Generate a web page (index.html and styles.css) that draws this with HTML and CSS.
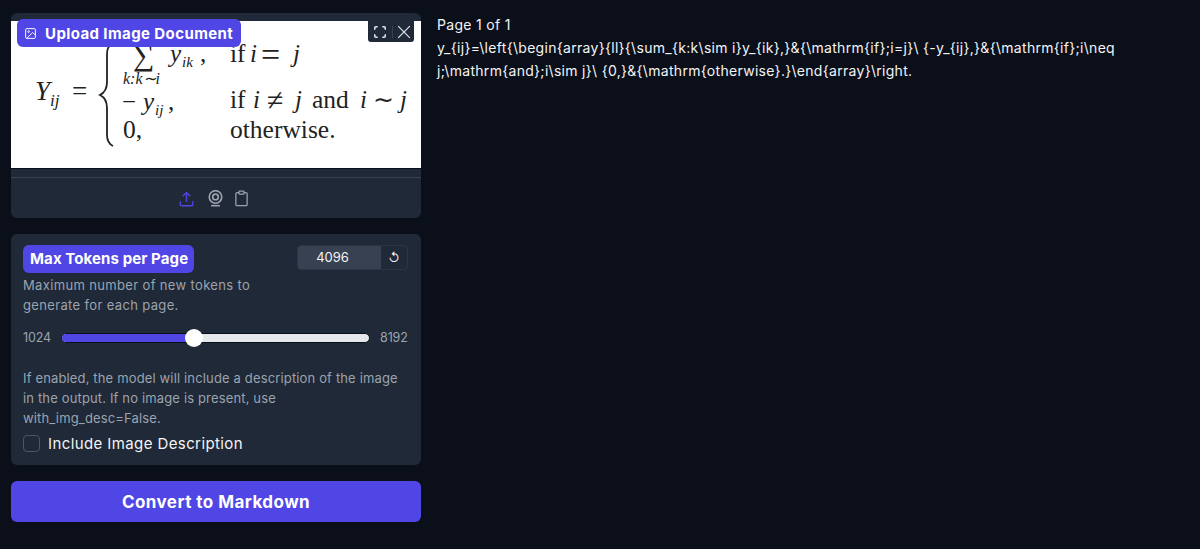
FILE: index.html
```html
<!DOCTYPE html>
<html lang="en">

<head>
	<meta charset="UTF-8">
	<title>Image to Markdown</title>
	<link rel="stylesheet" href="styles.css">
</head>

<body>
	<div class="page">
		<div class="left">
			<div class="card upload">
				<div class="upload-label">
					<svg class="label-icon" viewBox="0 0 24 24" fill="none" stroke="currentColor" stroke-width="1.8">
						<rect x="3" y="3" width="18" height="18" rx="2"></rect>
						<circle cx="8.5" cy="8.5" r="1.5"></circle>
						<path d="M21 15l-5-5L5 21"></path>
					</svg>
					Upload Image Document
				</div>
				<div class="image-actions">
					<button class="action-btn">
						<svg viewBox="0 0 24 24" fill="none" stroke="currentColor" stroke-width="2.6">
							<path d="M3 8V5a2 2 0 0 1 2-2h3M16 3h3a2 2 0 0 1 2 2v3M21 16v3a2 2 0 0 1-2 2h-3M8 21H5a2 2 0 0 1-2-2v-3"></path>
						</svg>
					</button>
					<span class="action-sep"></span>
					<button class="action-btn">
						<svg viewBox="0 0 24 24" fill="none" stroke="currentColor" stroke-width="2">
							<path d="M2 2l20 20M22 2L2 22"></path>
						</svg>
					</button>
				</div>
				<div class="preview">
					<svg class="formula" viewBox="0 0 410 148">
						<text class="m i" x="24" y="79" font-size="27">Y</text>
						<text class="m i" x="39" y="85" font-size="17">ij</text>
						<text class="m" x="61" y="79" font-size="27">=</text>
						<path class="brace" d="M102 22c-4 2-6 5-6 11v28c0 6-3 11-7 13 4 2 7 7 7 13v27c0 6 2 9 6 11"></path>
						<text class="m" x="122" y="44" font-size="30">∑</text>
						<text class="m i" x="159" y="41" font-size="25">y</text>
						<text class="m i" x="171" y="46" font-size="15">ik</text>
						<text class="m" x="189" y="41" font-size="25">,</text>
						<text class="m i" x="112" y="63" font-size="16">k:k∼i</text>
						<text class="m" x="219" y="41" font-size="25.500">if</text>
						<text class="m i" x="239" y="41" font-size="25">i</text>
						<text class="m" x="250" y="45" font-size="34">=</text>
						<text class="m i" x="282" y="41" font-size="25">j</text>
						<text class="m" x="111" y="89" font-size="25">−</text>
						<text class="m i" x="132" y="89" font-size="25">y</text>
						<text class="m i" x="144" y="94" font-size="15">ij</text>
						<text class="m" x="157" y="89" font-size="25">,</text>
						<text class="m" x="219" y="87" font-size="25.500">if</text>
						<text class="m i" x="242" y="87" font-size="25">i</text>
						<text class="m" x="256" y="89" font-size="30">≠</text>
						<text class="m i" x="284" y="87" font-size="25">j</text>
						<text class="m" x="301" y="87" font-size="25.500">and</text>
						<text class="m i" x="349" y="87" font-size="25">i</text>
						<text class="m" x="362" y="87" font-size="25">∼</text>
						<text class="m i" x="389" y="87" font-size="25">j</text>
						<text class="m" x="112" y="117" font-size="25.500">0,</text>
						<text class="m" x="219" y="117" font-size="25.500">otherwise.</text>
					</svg>
				</div>
				<div class="toolbar">
					<svg class="tool tool-active" viewBox="0 0 24 27" fill="none" stroke="currentColor" stroke-width="2.200">
						<path d="M2 18v5a2 2 0 0 0 2 2h16a2 2 0 0 0 2-2v-5M12 19V4M6 10l6-6 6 6"></path>
					</svg>
					<svg class="tool" viewBox="0 0 24 27" fill="none" stroke="currentColor" stroke-width="2.600">
						<circle cx="12" cy="11" r="10"></circle>
						<circle cx="12" cy="11" r="4.500"></circle>
						<path d="M5 25h14"></path>
					</svg>
					<svg class="tool" viewBox="0 0 24 27" fill="none" stroke="currentColor" stroke-width="2">
						<rect x="3" y="4" width="18" height="21" rx="2"></rect>
						<rect class="tool-clip" x="8" y="1.500" width="8" height="5" rx="1"></rect>
					</svg>
				</div>
			</div>

			<div class="card options">
				<div class="tokens-head">
					<div class="tokens-text">
						<span class="badge">Max Tokens per Page</span>
						<p class="hint">Maximum number of new tokens to generate for each page.</p>
					</div>
					<div class="number-box">
						<span class="number-value">4096</span>
						<span class="number-reset">↺</span>
					</div>
				</div>
				<div class="slider-row">
					<span class="slider-min">1024</span>
					<div class="slider">
						<div class="slider-fill"></div>
						<div class="slider-thumb"></div>
					</div>
					<span>8192</span>
				</div>
				<p class="hint desc">If enabled, the model will include a description of the image<br>in the output. If no image is present, use<br>with_img_desc=False.</p>
				<label class="check-row">
					<span class="checkbox"></span>
					Include Image Description
				</label>
			</div>

			<button class="convert">Convert to Markdown</button>
		</div>

		<div class="output">
			<p>Page 1 of 1</p>
			<p>y_{ij}=\left{\begin{array}{ll}{\sum_{k:k\sim i}y_{ik},}&amp;{\mathrm{if};i=j}\ {-y_{ij},}&amp;{\mathrm{if};i\neq<br>j;\mathrm{and};i\sim j}\ {0,}&amp;{\mathrm{otherwise}.}\end{array}\right.</p>
		</div>
	</div>
</body>

</html>
```

FILE: styles.css
```css
* {
	margin: 0;
	padding: 0;
	box-sizing: border-box;
}

body {
	font-family: "Inter", "Open Sans", sans-serif;
	background: #0b0f19;
	color: #f3f4f6;
	height: 549px;
	overflow: hidden;
}

.page {
	display: flex;
	gap: 16px;
	padding: 13px 11px;
}

.left {
	width: 410px;
	display: flex;
	flex-direction: column;
	gap: 16px;
	flex-shrink: 0;
}

.card {
	background: #1f2937;
	border-radius: 6px;
}

.upload {
	position: relative;
	height: 205px;
	padding-top: 8px;
}

.upload-label {
	position: absolute;
	top: 6px;
	left: 6px;
	width: 224px;
	height: 28px;
	display: flex;
	align-items: center;
	gap: 8px;
	padding-left: 7px;
	background: #4f46e5;
	border-radius: 6px;
	color: #fff;
	font-size: 15px;
	font-weight: 700;
	letter-spacing: 0.4px;
	white-space: nowrap;
}

.label-icon {
	width: 13px;
	height: 13px;
	flex-shrink: 0;
}

.image-actions {
	position: absolute;
	top: 8px;
	right: 7px;
	width: 46px;
	height: 21px;
	display: flex;
	align-items: center;
	justify-content: space-between;
	padding: 0 3px 0 5px;
	background: #1f2937;
	border-radius: 0 0 3px 3px;
}

.action-btn {
	background: none;
	border: none;
	color: #e5e7eb;
	display: flex;
}

.action-btn svg {
	width: 14px;
	height: 14px;
}

.action-sep {
	width: 1px;
	height: 12px;
	background: #374151;
}

.preview {
	height: 148px;
	background: #fff;
	border-bottom: 1px solid #0b0f19;
}

.formula {
	display: block;
	width: 410px;
	height: 148px;
}

.m {
	font-family: "Liberation Serif", serif;
	fill: #222;
}

.i {
	font-style: italic;
}

.brace {
	fill: none;
	stroke: #222;
	stroke-width: 1.800;
}

.toolbar {
	margin-top: 8px;
	height: 41px;
	border-top: 1px solid #374151;
	display: flex;
	align-items: center;
	justify-content: center;
	gap: 11px;
	padding-right: 4px;
}

.tool {
	width: 15px;
	height: 17px;
	color: #9ca3af;
}

.tool-active {
	color: #4f46e5;
	margin-right: 3px;
}

.tool-clip {
	fill: #1f2937;
}

.options {
	height: 231px;
	padding: 11px 13px 11px 12px;
}

.tokens-head {
	display: flex;
	justify-content: space-between;
	align-items: flex-start;
}

.tokens-text {
	width: 250px;
}

.badge {
	display: inline-block;
	background: #4f46e5;
	color: #fff;
	font-size: 15px;
	font-weight: 700;
	letter-spacing: 0.1px;
	line-height: 28px;
	padding: 0 6px 0 7px;
	border-radius: 6px;
}

.hint {
	color: #9ca3af;
	font-size: 13px;
	letter-spacing: 0.35px;
	line-height: 20px;
	margin-top: 2px;
}

.number-box {
	width: 111px;
	height: 25px;
	display: flex;
	background: #374151;
	border: 1px solid #2b3544;
	border-radius: 4px;
	overflow: hidden;
	font-size: 13px;
}

.number-value {
	flex: 1;
	padding-right: 14px;
	text-align: center;
	line-height: 23px;
}

.number-reset {
	width: 26px;
	background: #1f2937;
	font-size: 12px;
	text-align: center;
	line-height: 23px;
}

.slider-row {
	display: flex;
	align-items: center;
	gap: 10px;
	margin-top: 15px;
	color: #9ca3af;
	font-size: 12.500px;
	letter-spacing: -0.1px;
}

.slider-min {
	width: 28px;
}

.slider {
	position: relative;
	width: 309px;
	height: 10px;
	background: #e5e7eb;
	border: 1px solid #0b0f19;
	border-radius: 5px;
}

.slider-fill {
	width: 131px;
	height: 100%;
	background: #4f46e5;
	border-radius: 4px 0 0 4px;
}

.slider-thumb {
	position: absolute;
	left: 123px;
	top: -5px;
	width: 18px;
	height: 18px;
	background: #fff;
	border-radius: 50%;
}

.desc {
	margin-top: 23px;
	letter-spacing: 0.15px;
	white-space: nowrap;
}

.check-row {
	display: flex;
	align-items: center;
	gap: 8px;
	margin-top: 6px;
	font-size: 15px;
	letter-spacing: 0.4px;
	color: #f3f4f6;
}

.checkbox {
	width: 17px;
	height: 17px;
	background: #1f2937;
	border: 1px solid #4b5563;
	border-radius: 4px;
}

.convert {
	height: 41px;
	background: #4f46e5;
	border: none;
	border-radius: 6px;
	color: #fff;
	font-family: inherit;
	font-size: 17px;
	font-weight: 700;
	letter-spacing: 0.45px;
}

.output {
	font-size: 14px;
	letter-spacing: 0.3px;
	line-height: 23px;
}
```
